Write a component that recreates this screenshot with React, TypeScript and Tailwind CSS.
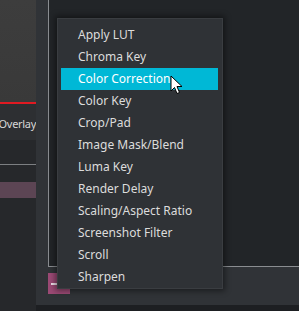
import React from "react";

const filters = [
  "Apply LUT",
  "Chroma Key",
  "Color Correction",
  "Color Key",
  "Crop/Pad",
  "Image Mask/Blend",
  "Luma Key",
  "Render Delay",
  "Scaling/Aspect Ratio",
  "Screenshot Filter",
  "Scroll",
  "Sharpen",
];

function Cursor() {
  return (
    <svg width="14" height="21" viewBox="0 0 14 21" className="absolute left-[170px] top-[75px]">
      <path
        d="M1 1 L1 16 L4.5 12.5 L7 18.5 L9.5 17.5 L7 11.5 L12 11.5 Z"
        fill="#ffffff"
        stroke="#000000"
        strokeWidth="1"
        strokeLinejoin="miter"
      />
    </svg>
  );
}

export default function App() {
  return (
    <div
      className="relative w-[299px] h-[311px] overflow-hidden flex bg-[#1e2023]"
      style={{ fontFamily: '"Noto Sans", "Open Sans", sans-serif' }}
    >
      {/* left dock */}
      <div className="w-[36px] flex flex-col bg-[#26282b]">
        <div className="h-[102px] bg-gradient-to-b from-[#3d3d3d] to-[#393939]" />
        <div className="h-[2px] bg-[#e01a22]" />
        <div className="h-[36px] bg-[#2d2f32] flex items-center justify-end text-[11px] tracking-[-0.3px] text-[#d8d8d8] whitespace-nowrap pt-[4px]">
          <span>Overlay</span>
        </div>
        <div className="h-[24px]" />
        <div className="h-[1px] bg-[#7c7f82]" />
        <div className="h-[17px]" />
        <div className="h-[16px] bg-[#5c4554]" />
      </div>

      {/* sources panel */}
      <div className="flex-1 flex flex-col bg-[#303337]">
        <div className="flex flex-col pl-[12px] h-[305px]">
          <div className="h-[267px] bg-[#222528] border-l border-b border-[#8a8d91]" />
          <div className="pt-[6px]">
            <div className="w-[22px] h-[21px] bg-[#9c4a75] flex items-center pl-[3px]">
              <div className="w-[6px] h-[2px] bg-[#f0e0ea]" />
            </div>
          </div>
        </div>
        <div className="flex-1 bg-[#1d1f22]" />
      </div>

      {/* context menu */}
      <div className="absolute left-[57px] top-[18px] w-[166px] h-[271px] bg-[#2f3236] border border-[#3a3d41] shadow-[0_0_6px_2px_rgba(0,0,0,0.45)] pt-[5px]">
        {filters.map((f) => (
          <div
            key={f}
            className={
              f === "Color Correction"
                ? "h-[22px] mx-[3px] mr-[4px] bg-[#00b8d6] text-white text-[12px] leading-[22px] pl-[17px] whitespace-nowrap"
                : "h-[22px] mx-[3px] mr-[4px] text-[#dcdcdc] text-[12px] leading-[22px] pl-[17px] whitespace-nowrap"
            }
          >
            {f}
          </div>
        ))}
      </div>

      <Cursor />
    </div>
  );
}
